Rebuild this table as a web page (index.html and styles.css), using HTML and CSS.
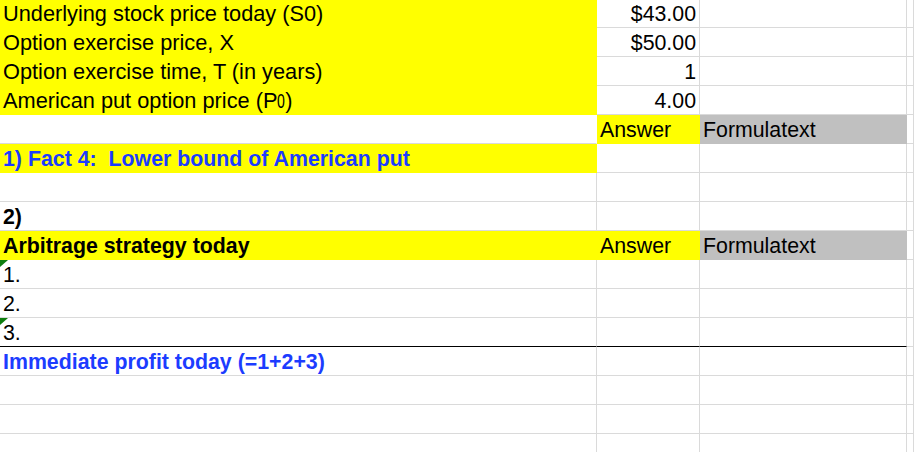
FILE: index.html
```html
<!DOCTYPE html>
<html>
<head>
<meta charset="utf-8">
<link rel="stylesheet" href="styles.css">
</head>
<body>
<div class="sheet">
  <div class="cell fill-y label">Underlying stock price today (S0)</div>
  <div class="cell num">$43.00</div>
  <div class="cell"></div>
  <div class="cell"></div>

  <div class="cell fill-y label">Option exercise price, X</div>
  <div class="cell num">$50.00</div>
  <div class="cell"></div>
  <div class="cell"></div>

  <div class="cell fill-y label">Option exercise time, T (in years)</div>
  <div class="cell num">1</div>
  <div class="cell"></div>
  <div class="cell"></div>

  <div class="cell fill-y label">American put option price (P<span class="sub">0</span>)</div>
  <div class="cell num">4.00</div>
  <div class="cell"></div>
  <div class="cell"></div>

  <div class="cell plain"></div>
  <div class="cell fill-y">Answer</div>
  <div class="cell fill-g">Formulatext</div>
  <div class="cell"></div>

  <div class="cell fill-y bold blue">1) Fact 4:&nbsp; Lower bound of American put</div>
  <div class="cell"></div>
  <div class="cell"></div>
  <div class="cell"></div>

  <div class="cell"></div>
  <div class="cell"></div>
  <div class="cell"></div>
  <div class="cell"></div>

  <div class="cell bold">2)</div>
  <div class="cell"></div>
  <div class="cell"></div>
  <div class="cell"></div>

  <div class="cell fill-y bold">Arbitrage strategy today</div>
  <div class="cell fill-y">Answer</div>
  <div class="cell fill-g">Formulatext</div>
  <div class="cell"></div>

  <div class="cell flag">1.</div>
  <div class="cell"></div>
  <div class="cell"></div>
  <div class="cell"></div>

  <div class="cell">2.</div>
  <div class="cell"></div>
  <div class="cell"></div>
  <div class="cell"></div>

  <div class="cell flag rule">3.</div>
  <div class="cell rule"></div>
  <div class="cell rule"></div>
  <div class="cell"></div>

  <div class="cell bold blue">Immediate profit today (=1+2+3)</div>
  <div class="cell"></div>
  <div class="cell"></div>
  <div class="cell"></div>

  <div class="cell"></div>
  <div class="cell"></div>
  <div class="cell"></div>
  <div class="cell"></div>

  <div class="cell"></div>
  <div class="cell"></div>
  <div class="cell"></div>
  <div class="cell"></div>

  <div class="cell"></div>
  <div class="cell"></div>
  <div class="cell"></div>
  <div class="cell"></div>
</div>
</body>
</html>
```

FILE: styles.css
```css
html, body {
  margin: 0;
  padding: 0;
  background: #ffffff;
  overflow: hidden;
}

.sheet {
  margin-top: -1px;
  display: grid;
  grid-template-columns: 597px 103px 207px 1fr;
  grid-auto-rows: 29px;
  font-family: "Liberation Sans", Arial, sans-serif;
  font-size: 21.33px;
  color: #000000;
}

.cell {
  box-sizing: border-box;
  border-right: 1px solid #dadada;
  border-bottom: 1px solid #dadada;
  padding: 2px 3px 0 3px;
  line-height: 26px;
  white-space: nowrap;
  position: relative;
}

.label {
  font-size: 21.75px;
}

.plain {
  border-right-color: #ffffff;
}

.fill-y {
  background: #ffff00;
  border-color: #ffff00;
}

.fill-g {
  background: #c0c0c0;
  border-color: #c0c0c0;
}

.num {
  text-align: right;
}

.bold {
  font-weight: bold;
}

.blue {
  color: #1c3cff;
}

.rule {
  border-bottom-color: #000000;
}

.sub {
  display: inline-block;
  font-size: 0.9em;
  transform: scaleX(0.72);
  transform-origin: left bottom;
  margin-right: -3px;
}

.flag::before {
  content: "";
  position: absolute;
  left: 0;
  top: 0;
  width: 0;
  height: 0;
  border-top: 7px solid #0e7d0e;
  border-right: 8px solid transparent;
}
```
